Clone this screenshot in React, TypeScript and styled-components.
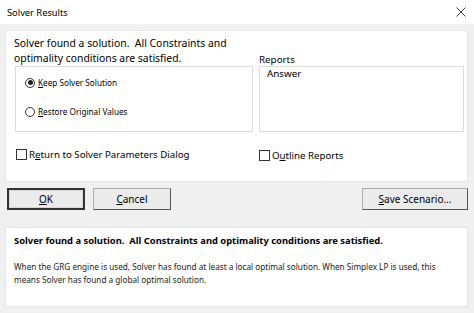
import styled, { createGlobalStyle } from 'styled-components';

const GlobalStyle = createGlobalStyle`
  html, body {
    margin: 0;
    padding: 0;
    background: #f0f0f0;
  }
  body {
    font-family: "Noto Sans", "Open Sans", sans-serif;
    color: #000;
  }
`;

const Window = styled.div`
  width: 474px;
  height: 313px;
  display: flex;
  flex-direction: column;
  background: #f0f0f0;
  overflow: hidden;
`;

const TitleBar = styled.div`
  height: 24px;
  display: flex;
  align-items: center;
  justify-content: space-between;
  padding: 0 8px 0 7px;
  background: #fff;
  font-size: 9.3px;
  flex-shrink: 0;
`;

const Body = styled.div`
  flex: 1;
  display: flex;
  flex-direction: column;
  padding: 6px 6px 0 5px;
`;

const Panel = styled.div<{ $height: number }>`
  height: ${(p) => p.$height}px;
  box-sizing: border-box;
  background: #fff;
  border: 1px solid #e6e6e6;
`;

const TopPanel = styled(Panel)`
  padding: 5px 4px 0 8px;
  display: flex;
  flex-direction: column;
`;

const Columns = styled.div`
  display: grid;
  grid-template-columns: 239px 205px;
  column-gap: 6px;
  align-items: end;
`;

const Column = styled.div`
  display: flex;
  flex-direction: column;
`;

const Heading = styled.div`
  font-size: 10.4px;
  line-height: 15px;
  padding-right: 4px;
`;

const GroupBox = styled.div`
  height: 66px;
  box-sizing: border-box;
  margin-left: 1px;
  border: 1px solid #dcdcdc;
  display: flex;
  flex-direction: column;
  justify-content: space-around;
  padding: 1px 0 5px 9px;
`;

const Option = styled.label`
  display: flex;
  align-items: center;
  gap: 3px;
  font-size: 8.2px;
`;

const Radio = styled.span<{ $checked?: boolean }>`
  width: 10px;
  height: 10px;
  box-sizing: border-box;
  border: 1px solid #333;
  border-radius: 50%;
  display: flex;
  align-items: center;
  justify-content: center;
  &::after {
    content: '';
    width: 5px;
    height: 5px;
    border-radius: 50%;
    background: ${(p) => (p.$checked ? '#222' : 'transparent')};
  }
`;

const Label = styled.div`
  font-size: 9.8px;
  line-height: 13px;
`;

const ListBox = styled.div`
  height: 66px;
  box-sizing: border-box;
  border: 1px solid #dcdcdc;
  padding: 0 0 0 7px;
  font-size: 9.8px;
  line-height: 13px;
`;

const CheckRow = styled.div`
  display: grid;
  grid-template-columns: 243px 1fr;
  margin-top: 15px;
  padding-left: 2px;
`;

const Check = styled.label<{ $offset?: number }>`
  display: flex;
  align-items: center;
  gap: 2px;
  font-size: 9.7px;
  margin-top: ${(p) => p.$offset ?? 0}px;
`;

const Box = styled.span`
  width: 11px;
  height: 11px;
  box-sizing: border-box;
  border: 1px solid #333;
`;

const ButtonRow = styled.div`
  display: flex;
  align-items: center;
  margin-top: 6px;
  padding: 0 0 0 2px;
  gap: 8px;
  height: 22px;
`;

const Button = styled.div<{ $width: number; $default?: boolean }>`
  width: ${(p) => p.$width}px;
  height: 22px;
  box-sizing: border-box;
  display: flex;
  align-items: center;
  justify-content: center;
  font-size: 10px;
  background: #ebebeb;
  border: 1px solid #adadad;
  border-right-color: #555;
  border-bottom-color: #555;
  ${(p) =>
    p.$default &&
    `
    border: 2px solid #333;
    box-shadow: inset 0 0 0 1px #d8d8d8;
  `}
`;

const Spacer = styled.div`
  flex: 1;
`;

const MessagePanel = styled(Panel)`
  margin-top: 17px;
  padding: 6px 8px 0 8px;
`;

const MessageTitle = styled.div`
  font-size: 9.4px;
  font-weight: 700;
  line-height: 14px;
`;

const MessageText = styled.div`
  margin-top: 12px;
  font-size: 8.2px;
  line-height: 13px;
  color: #222;
`;

const U = styled.span`
  text-decoration: underline;
`;

export default function App() {
  return (
    <>
      <GlobalStyle />
      <Window>
        <TitleBar>
          <span>Solver Results</span>
          <svg width="10" height="10" viewBox="0 0 10 10">
            <path d="M0.5 0.5 L9.5 9.5 M9.5 0.5 L0.5 9.5" stroke="#444" strokeWidth="1" />
          </svg>
        </TitleBar>
        <Body>
          <TopPanel $height={152}>
            <Columns>
              <Column>
                <Heading>
                  Solver found a solution.&nbsp; All Constraints and optimality conditions are
                  satisfied.
                </Heading>
                <GroupBox>
                  <Option>
                    <Radio $checked />
                    <span>
                      <U>K</U>eep Solver Solution
                    </span>
                  </Option>
                  <Option>
                    <Radio />
                    <span>
                      <U>R</U>estore Original Values
                    </span>
                  </Option>
                </GroupBox>
              </Column>
              <Column>
                <Label>Reports</Label>
                <ListBox>Answer</ListBox>
              </Column>
            </Columns>
            <CheckRow>
              <Check>
                <Box />
                <span>
                  R<U>e</U>turn to Solver Parameters Dialog
                </span>
              </Check>
              <Check $offset={2}>
                <Box />
                <span>
                  O<U>u</U>tline Reports
                </span>
              </Check>
            </CheckRow>
          </TopPanel>
          <ButtonRow>
            <Button $width={78} $default>
              <span>
                <U>O</U>K
              </span>
            </Button>
            <Button $width={78}>
              <span>
                <U>C</U>ancel
              </span>
            </Button>
            <Spacer />
            <Button $width={106}>
              <span>
                <U>S</U>ave Scenario...
              </span>
            </Button>
          </ButtonRow>
          <MessagePanel $height={80}>
            <MessageTitle>
              Solver found a solution.&nbsp; All Constraints and optimality conditions are
              satisfied.
            </MessageTitle>
            <MessageText>
              When the GRG engine is used, Solver has found at least a local optimal solution.
              When Simplex LP is used, this means Solver has found a global optimal solution.
            </MessageText>
          </MessagePanel>
        </Body>
      </Window>
    </>
  );
}
